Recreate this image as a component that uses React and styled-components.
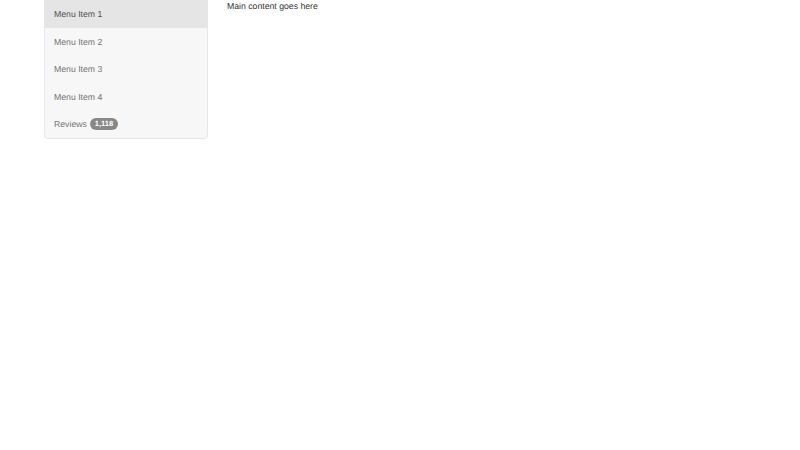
import React from "react";
import styled, { createGlobalStyle } from "styled-components";

const GlobalStyle = createGlobalStyle`
  body {
    margin: 0;
    font-family: "Liberation Sans", Arial, sans-serif;
    font-size: 8.7px;
    color: #333;
    background: #fff;
    text-rendering: geometricPrecision;
  }
`;

const items = [
  { label: "Menu Item 1", active: true },
  { label: "Menu Item 2" },
  { label: "Menu Item 3" },
  { label: "Menu Item 4" },
  { label: "Reviews", badge: "1,118" },
];

const App = () => {
  return (
    <>
      <GlobalStyle />
      <Page>
        <Sidebar>
          {items.map((item) => (
            <NavItem key={item.label} $active={item.active}>
              {item.label}
              {item.badge && <Badge>{item.badge}</Badge>}
            </NavItem>
          ))}
        </Sidebar>
        <Main>Main content goes here</Main>
      </Page>
    </>
  );
};

const Page = styled.div`
  display: flex;
  align-items: flex-start;
  gap: 19px;
  padding-left: 44px;
`;

const Sidebar = styled.ul`
  list-style: none;
  margin: -4px 0 0;
  padding: 0;
  width: 164px;
  box-sizing: border-box;
  background: #f7f7f7;
  border: 1px solid #e6e6e6;
  border-radius: 4px;
  overflow: hidden;
  box-shadow: inset 0 1px 1px rgba(0, 0, 0, 0.03);
`;

const NavItem = styled.li`
  display: flex;
  align-items: center;
  gap: 3px;
  height: 27.5px;
  padding: 0 9px;
  color: ${(p) => (p.$active ? "#505050" : "#737373")};
  background: ${(p) => (p.$active ? "#e5e5e5" : "transparent")};
  &:first-child {
    height: 31px;
    padding-top: 3px;
    box-sizing: border-box;
  }
`;

const Badge = styled.span`
  display: inline-block;
  padding: 2px 5px;
  border-radius: 7px;
  background: #888;
  color: #fff;
  font-size: 7.5px;
  font-weight: bold;
  line-height: 8px;
`;

const Main = styled.div`
  padding-top: 1px;
  line-height: 10px;
`;

export default App;
